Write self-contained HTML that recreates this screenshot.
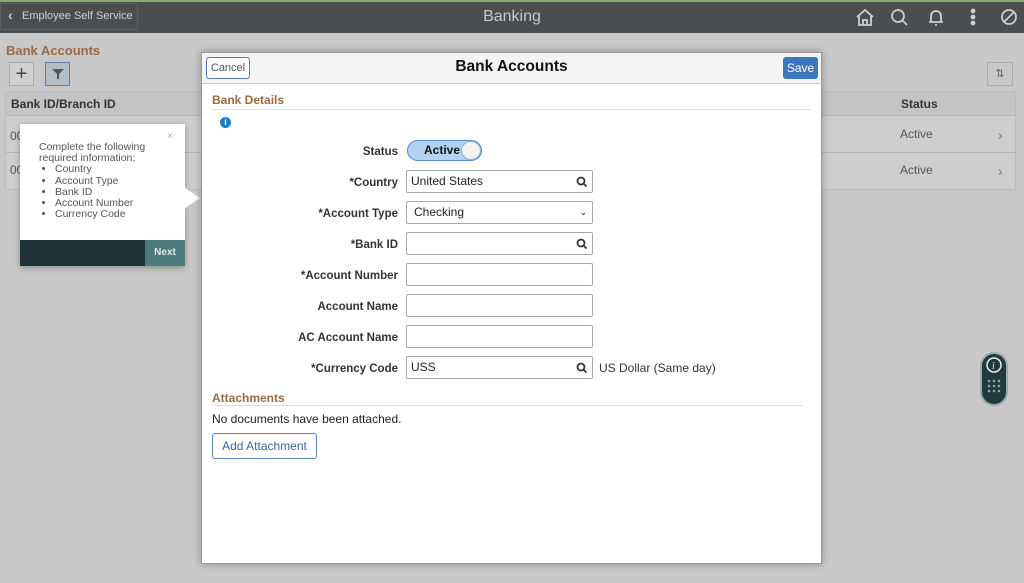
<!DOCTYPE html>
<html><head><style>
*{box-sizing:border-box;margin:0;padding:0}
body{width:1024px;height:583px;overflow:hidden;background:#c8c8c8;font-family:"Liberation Sans",Arial,sans-serif;position:relative;font-size:12px;color:#333}
.abs{position:absolute}
.hdr{left:0;top:0;width:1024px;height:33px;background:#4b4e51;border-top:2px solid #8fa87a}
.back{left:0;top:3px;width:138px;height:27px;border:1px solid #5c5f62;color:#d0d0d0;font-size:11px;line-height:25px;padding-left:21px;white-space:nowrap}
.title{left:0;width:1024px;top:8px;text-align:center;color:#c9c9c9;font-size:16px}
.lbl{font-weight:bold;color:#333;text-align:right;width:186px;left:10px;font-size:11.5px;margin-top:2px}
.inp{left:204px;width:187px;height:23px;border:1px solid #a8a8a8;border-radius:2px;background:#fff;font-size:12px;line-height:21px;padding-left:4px;color:#222}
</style></head><body>
<div class="abs hdr"></div>
<div class="abs back"><span style="position:absolute;left:7px;top:-1px;font-weight:bold;font-size:14px">‹</span>Employee Self Service</div>
<div class="abs title">Banking</div>
<svg class="abs" style="left:850px;top:6px" width="174" height="22" fill="none" stroke="#cfcfcf" stroke-width="1.8">
<path d="M7 11 L15 4 L23 11 M9 10 V19 H21 V10 M13 19 V14 H17 V19"/>
<circle cx="48" cy="10" r="6"/><path d="M52 14 L57 19"/>
<path d="M81 16 V10 a5 5 0 0 1 10 0 V16 H81 M79 16 H93 M85 19 H87"/>
<circle cx="123" cy="5" r="1.5" fill="#cfcfcf"/><circle cx="123" cy="11" r="1.5" fill="#cfcfcf"/><circle cx="123" cy="17" r="1.5" fill="#cfcfcf"/>
<circle cx="159" cy="11" r="7"/><path d="M154 16 L164 6"/>
</svg>
<div class="abs" style="left:6px;top:43px;color:#9b6a43;font-weight:bold;font-size:13px">Bank Accounts</div>
<div class="abs" style="left:9px;top:62px;width:25px;height:24px;border:1px solid #aaa;background:#d0d0d0;text-align:center;font-size:20px;line-height:22px;color:#444">+</div>
<div class="abs" style="left:45px;top:62px;width:25px;height:24px;border:1px solid #5b7fa8;background:#b5bec8;"></div>
<svg class="abs" style="left:51px;top:68px" width="14" height="12"><path d="M1 1 H13 L8 6 V11 L6 11 V6 Z" fill="#555"/></svg>
<div class="abs" style="left:5px;top:91px;width:1011px;height:99px;background:#cecece;border:1px solid #bbb"></div>
<div class="abs" style="left:6px;top:92px;width:1009px;height:24px;background:#c4c4c4;border-bottom:1px solid #b5b5b5"></div>
<div class="abs" style="left:11px;top:97px;font-weight:bold;font-size:12px">Bank ID/Branch ID</div>
<div class="abs" style="left:901px;top:97px;font-weight:bold;font-size:12px">Status</div>
<div class="abs" style="left:6px;top:152px;width:1009px;height:1px;background:#b5b5b5"></div>
<div class="abs" style="left:900px;top:127px;color:#555">Active</div>
<div class="abs" style="left:900px;top:163px;color:#555">Active</div>
<div class="abs" style="left:998px;top:127px;color:#777;font-size:14px">›</div>
<div class="abs" style="left:998px;top:163px;color:#777;font-size:14px">›</div>
<div class="abs" style="left:10px;top:129px;color:#555">00</div>
<div class="abs" style="left:10px;top:163px;color:#555">00</div>
<div class="abs" style="left:987px;top:62px;width:26px;height:24px;border:1px solid #aaa;color:#666;text-align:center;line-height:22px;font-size:11px">⇅</div>
<!-- tooltip -->
<div class="abs" style="left:20px;top:124px;width:165px;height:142px;background:#fff;box-shadow:0 2px 6px rgba(0,0,0,.3)"></div>
<div class="abs" style="left:184px;top:187px;width:0;height:0;border-top:11px solid transparent;border-bottom:11px solid transparent;border-left:16px solid #fff"></div>
<div class="abs" style="left:167px;top:131px;color:#aaa;font-size:10px">×</div>
<div class="abs" style="left:39px;top:142px;font-size:10.5px;line-height:11.2px;color:#555">Complete the following<br>required information:
<ul style="padding-left:16px"><li>Country</li><li>Account Type</li><li>Bank ID</li><li>Account Number</li><li>Currency Code</li></ul></div>
<div class="abs" style="left:20px;top:240px;width:125px;height:26px;background:#1f3339"></div>
<div class="abs" style="left:145px;top:240px;width:40px;height:26px;background:#4d7a7a;color:#e0eaea;font-weight:bold;font-size:10px;text-align:center;line-height:26px">Next</div>
<!-- side widget -->
<div class="abs" style="left:980px;top:352px;width:28px;height:54px;border-radius:14px;background:#22393d;border:2px solid #9aa"></div>
<svg class="abs" style="left:984px;top:355px" width="20" height="48"><circle cx="10" cy="10" r="7" fill="none" stroke="#eee" stroke-width="1.5"/><text x="8" y="14" font-size="10" font-style="italic" fill="#eee" font-family="Liberation Serif">i</text>
<g fill="#8aa"><circle cx="5" cy="26" r="1.3"/><circle cx="10" cy="26" r="1.3"/><circle cx="15" cy="26" r="1.3"/><circle cx="5" cy="31" r="1.3"/><circle cx="10" cy="31" r="1.3"/><circle cx="15" cy="31" r="1.3"/><circle cx="5" cy="36" r="1.3"/><circle cx="10" cy="36" r="1.3"/><circle cx="15" cy="36" r="1.3"/></g></svg>
<!-- modal -->
<div class="abs" style="left:201px;top:52px;width:621px;height:512px;background:#fff;border:1px solid #999;box-shadow:0 0 8px rgba(0,0,0,.3)">
 <div class="abs" style="left:0;top:0;width:619px;height:31px;background:#f4f4f4;border-bottom:1px solid #ccc"></div>
 <div class="abs" style="left:4px;top:4px;width:44px;height:22px;border:1px solid #5a7ca4;border-radius:3px;color:#555;text-align:center;line-height:20px;font-size:11px;background:#fff">Cancel</div>
 <div class="abs" style="left:0;width:619px;top:5px;text-align:center;font-weight:bold;font-size:15.5px;color:#111">Bank Accounts</div>
 <div class="abs" style="left:581px;top:4px;width:35px;height:22px;background:#3c76bd;border-radius:3px;color:#fff;text-align:center;line-height:22px;font-size:12px">Save</div>
 <div class="abs" style="left:10px;top:40px;color:#9b6a43;font-weight:bold;font-size:12px">Bank Details</div>
 <div class="abs" style="left:10px;top:56px;width:598px;height:1px;background:#ddd"></div>
 <div class="abs" style="left:18px;top:64px;width:11px;height:11px;border-radius:50%;background:#1a7fc1;color:#fff;font-size:9px;font-weight:bold;text-align:center;line-height:11px">i</div>
 <div class="abs lbl" style="top:91px">Status</div>
 <div class="abs" style="left:205px;top:87px;width:75px;height:21px;border-radius:11px;background:#b3d1f2;border:1px solid #5a8ac8;font-weight:bold;line-height:19px;padding-left:16px;color:#111">Active</div>
 <div class="abs" style="left:259px;top:88px;width:20px;height:19px;border-radius:50%;background:#f2f2f2;border:1px solid #9ab"></div>
 <div class="abs lbl" style="top:122px">*Country</div>
 <div class="abs inp" style="top:117px">United States</div>
 <div class="abs lbl" style="top:153px">*Account Type</div>
 <div class="abs inp" style="top:148px;padding-left:7px">Checking<span style="position:absolute;right:5px;font-size:9px">⌄</span></div>
 <div class="abs lbl" style="top:184px">*Bank ID</div>
 <div class="abs inp" style="top:179px"></div>
 <div class="abs lbl" style="top:215px">*Account Number</div>
 <div class="abs inp" style="top:210px"></div>
 <div class="abs lbl" style="top:246px">Account Name</div>
 <div class="abs inp" style="top:241px"></div>
 <div class="abs lbl" style="top:277px">AC Account Name</div>
 <div class="abs inp" style="top:272px"></div>
 <div class="abs lbl" style="top:308px">*Currency Code</div>
 <div class="abs inp" style="top:303px">USS</div>
 <div class="abs" style="left:397px;top:308px;font-size:12px;color:#333">US Dollar (Same day)</div>
 <svg class="abs" style="left:374px;top:123px" width="12" height="200" fill="none" stroke="#333" stroke-width="1.8"><circle cx="5" cy="5" r="3.5"/><path d="M7.5 7.5 L10.5 10.5"/><circle cx="5" cy="67" r="3.5"/><path d="M7.5 69.5 L10.5 72.5"/><circle cx="5" cy="191" r="3.5"/><path d="M7.5 193.5 L10.5 196.5"/></svg>
 <div class="abs" style="left:10px;top:338px;color:#9b6a43;font-weight:bold;font-size:12px">Attachments</div>
 <div class="abs" style="left:10px;top:352px;width:590px;height:1px;background:#ddd"></div>
 <div class="abs" style="left:10px;top:359px;color:#222">No documents have been attached.</div>
 <div class="abs" style="left:10px;top:380px;width:105px;height:26px;border:1px solid #5a86b8;border-radius:3px;color:#3b64a0;text-align:center;line-height:24px">Add Attachment</div>
</div>
</body></html>
